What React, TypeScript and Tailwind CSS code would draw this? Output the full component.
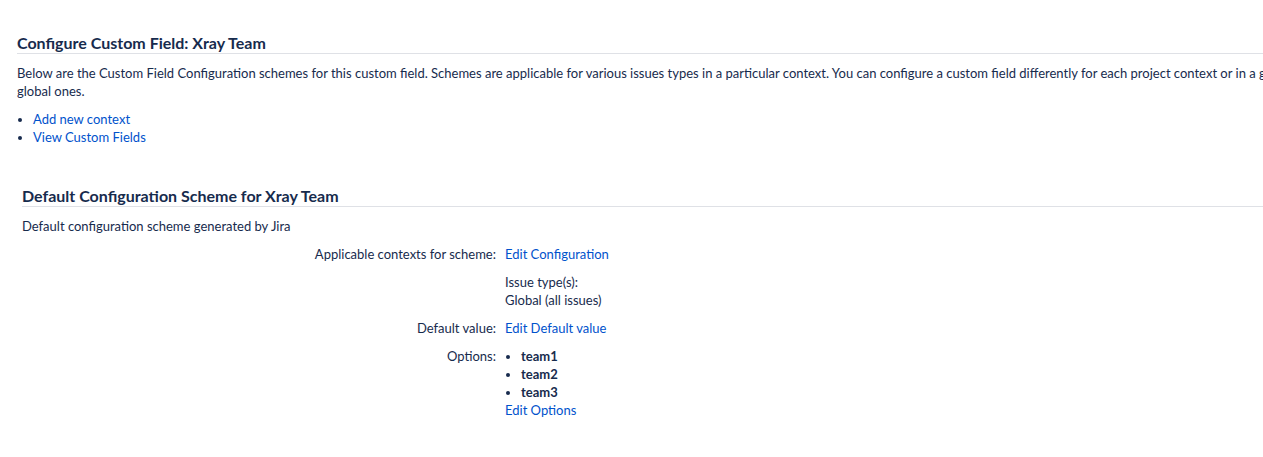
export default function App() {
  const font = { fontFamily: 'Lato, "Noto Sans", sans-serif' }
  return (
    <div className="h-[457px] w-[1263px] overflow-hidden bg-white text-[13px] leading-[18px] text-[#172b4d]" style={font}>
      <div className="w-[1700px] pl-[17px] pt-[33px]">
        {/* Page header */}
        <h2 className="border-b border-[#dfe1e6] text-[16px] font-bold leading-[20px]">
          Configure Custom Field: Xray Team
        </h2>
        <p className="mt-[10px] whitespace-nowrap">
          Below are the Custom Field Configuration schemes for this custom field. Schemes are applicable for various
          issues types in a particular context. You can configure a custom field differently for each project context or
          in a global context. Project specific contexts override
          <br />
          global ones.
        </p>
        <ul className="mt-[10px] list-disc pl-[16px] text-[#0052cc]">
          <li className="marker:text-[#172b4d]">
            <a href="#">Add new context</a>
          </li>
          <li className="marker:text-[#172b4d]">
            <a href="#">View Custom Fields</a>
          </li>
        </ul>

        {/* Scheme */}
        <div className="mt-[40px] pl-[5px]">
          <h3 className="border-b border-[#dfe1e6] text-[16px] font-bold leading-[20px]">
            Default Configuration Scheme for Xray Team
          </h3>
          <p className="mt-[10px]">Default configuration scheme generated by Jira</p>

          <div className="mt-[10px] flex flex-col gap-[10px]">
            <div className="flex">
              <div className="w-[483px] pr-[9px] text-right">Applicable contexts for scheme:</div>
              <a href="#" className="text-[#0052cc]">Edit Configuration</a>
            </div>
            <div className="flex">
              <div className="w-[483px] pr-[9px]" />
              <div>
                <div>Issue type(s):</div>
                <div>Global (all issues)</div>
              </div>
            </div>
            <div className="flex">
              <div className="w-[483px] pr-[9px] text-right">Default value:</div>
              <a href="#" className="text-[#0052cc]">Edit Default value</a>
            </div>
            <div className="flex">
              <div className="w-[483px] pr-[9px] text-right">Options:</div>
              <div>
                <ul className="list-disc pl-[16px] font-bold">
                  <li>team1</li>
                  <li>team2</li>
                  <li>team3</li>
                </ul>
                <a href="#" className="text-[#0052cc]">Edit Options</a>
              </div>
            </div>
          </div>
        </div>
      </div>
    </div>
  )
}
